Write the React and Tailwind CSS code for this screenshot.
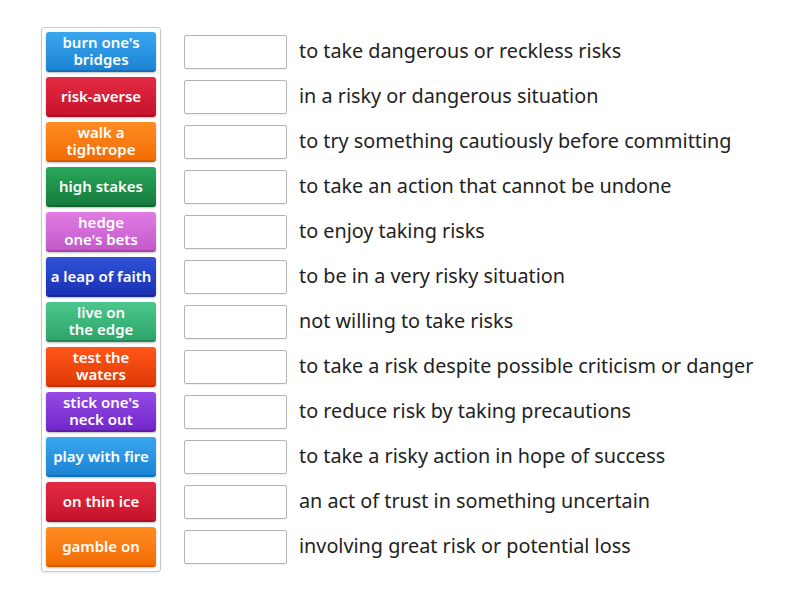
const tiles = [
  { text: ["burn one's", 'bridges'], cls: 'from-[#3aa6ef] to-[#1b84d4] border-[#1670b8]' },
  { text: ['risk-averse'], cls: 'from-[#e42a43] to-[#c7122b] border-[#a80f24]' },
  { text: ['walk a', 'tightrope'], cls: 'from-[#ff8c22] to-[#f26c00] border-[#d25c00]' },
  { text: ['high stakes'], cls: 'from-[#29a85a] to-[#167c3d] border-[#106630]' },
  { text: ['hedge', "one's bets"], cls: 'from-[#e07ce3] to-[#c459ca] border-[#a846ae]' },
  { text: ['a leap of faith'], cls: 'from-[#3052d8] to-[#1c31b4] border-[#162794]' },
  { text: ['live on', 'the edge'], cls: 'from-[#4cc78d] to-[#2da56a] border-[#23895a]' },
  { text: ['test the', 'waters'], cls: 'from-[#ff5619] to-[#e03a05] border-[#c03004]' },
  { text: ["stick one's", 'neck out'], cls: 'from-[#954ae4] to-[#7226ca] border-[#5e1dab]' },
  { text: ['play with fire'], cls: 'from-[#3aa6ef] to-[#1b84d4] border-[#1670b8]' },
  { text: ['on thin ice'], cls: 'from-[#e42a43] to-[#c7122b] border-[#a80f24]' },
  { text: ['gamble on'], cls: 'from-[#ff8c22] to-[#f26c00] border-[#d25c00]' },
]

const definitions = [
  'to take dangerous or reckless risks',
  'in a risky or dangerous situation',
  'to try something cautiously before committing',
  'to take an action that cannot be undone',
  'to enjoy taking risks',
  'to be in a very risky situation',
  'not willing to take risks',
  'to take a risk despite possible criticism or danger',
  'to reduce risk by taking precautions',
  'to take a risky action in hope of success',
  'an act of trust in something uncertain',
  'involving great risk or potential loss',
]

function Tile({ text, cls }) {
  return (
    <div
      className={`h-10 w-[110px] rounded-[3px] border-b-2 bg-gradient-to-b ${cls} flex flex-col items-center justify-center text-white text-[15px] font-semibold leading-[17px] shadow-[0_1px_2px_rgba(0,0,0,0.25)]`}
    >
      {text.map(line => (
        <span key={line} className="whitespace-nowrap">{line}</span>
      ))}
    </div>
  )
}

export default function App() {
  return (
    <div
      className="w-[800px] h-[600px] bg-white flex items-start pl-[41px] pt-[27px]"
      style={{ fontFamily: '"Noto Sans", "Open Sans", sans-serif' }}
    >
      {/* tile bank */}
      <div className="border border-[#c8c8c8] rounded-[3px] p-1 flex flex-col gap-[5px] shadow-[0_1px_2px_rgba(0,0,0,0.08)]">
        {tiles.map(t => (
          <Tile key={t.text.join(' ')} {...t} />
        ))}
      </div>

      {/* answer rows */}
      <div className="ml-[23px] mt-[5px] flex flex-col gap-[5px]">
        {definitions.map(d => (
          <div key={d} className="h-10 flex items-center">
            <div className="w-[103px] h-[34px] border border-[#b4b4b4] rounded-[2px] bg-white shadow-[0_1px_1px_rgba(0,0,0,0.06)]" />
            <span className="ml-3 mb-[3px] text-[19.8px] leading-[26px] text-[#222] whitespace-nowrap">{d}</span>
          </div>
        ))}
      </div>
    </div>
  )
}
